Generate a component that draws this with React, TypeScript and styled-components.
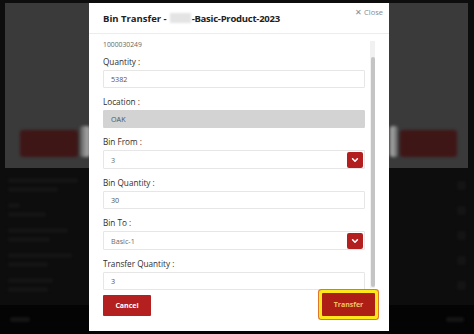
import React from "react";
import styled, { createGlobalStyle } from "styled-components";

const Global = createGlobalStyle`
  html, body { margin: 0; padding: 0; width: 474px; height: 334px; overflow: hidden; background: #0d0d0d; }
  body { font-family: "Open Sans", "Liberation Sans", sans-serif; }
  * { box-sizing: border-box; }
`;

const Page = styled.div`
  position: relative;
  width: 474px;
  height: 334px;
  display: flex;
  flex-direction: column;
  background: #0d0d0d;
  overflow: hidden;
`;

const TopPanel = styled.div`
  margin: 3px 6px 0 5px;
  height: 165px;
  flex-shrink: 0;
  background: #3a3a3a;
  display: flex;
  align-items: flex-end;
  justify-content: space-between;
  padding: 0 11px 11px 15px;
`;

const BlobGroup = styled.div`
  display: flex;
  gap: 2px;
  align-items: flex-end;
`;

const Blob = styled.div<{ $tone: "red" | "light"; $w: number }>`
  width: ${(p) => p.$w}px;
  height: ${(p) => (p.$tone === "red" ? 27 : 31)}px;
  background: ${(p) =>
    p.$tone === "red"
      ? "#3f1616"
      : "linear-gradient(90deg, #5a5a5a, #9a9a9a 60%, #a8a8a8)"};
  border-radius: 3px;
  filter: blur(1.5px);
`;

const BlobLightRight = styled(Blob)`
  background: linear-gradient(90deg, #a8a8a8, #9a9a9a 40%, #5a5a5a);
`;

const List = styled.div`
  flex: 1;
  display: flex;
  flex-direction: column;
  gap: 7px;
  padding: 8px 8px 0 8px;
`;

const ListRow = styled.div`
  display: flex;
  justify-content: space-between;
  align-items: center;
`;

const FaintText = styled.div<{ $w: number }>`
  width: ${(p) => p.$w}px;
  height: 5px;
  margin: 2px 0;
  background: #141414;
  border-radius: 2px;
  filter: blur(1px);
`;

const FaintStack = styled.div`
  display: flex;
  flex-direction: column;
`;

const FaintDot = styled.div`
  width: 9px;
  height: 9px;
  border-radius: 2px;
  background: #141414;
  filter: blur(1px);
`;

const BottomBar = styled.div`
  height: 29px;
  flex-shrink: 0;
  background: #040404;
  display: flex;
  align-items: center;
  justify-content: space-between;
  padding: 0 10px;
`;

const Modal = styled.div`
  position: absolute;
  left: 89px;
  top: 3px;
  width: 300px;
  height: 328px;
  background: #ffffff;
  display: flex;
  flex-direction: column;
`;

const Header = styled.div`
  height: 31px;
  flex-shrink: 0;
  border-bottom: 1px solid #ececec;
  display: flex;
  justify-content: space-between;
  align-items: center;
  padding: 0 6px 0 14px;
`;

const Title = styled.h2`
  margin: 0;
  font-size: 9.5px;
  font-weight: 700;
  color: #222;
  display: flex;
  align-items: center;
  white-space: nowrap;
`;

const TitleTail = styled.span`
  letter-spacing: -0.25px;
`;

const Redacted = styled.span`
  display: inline-block;
  width: 21px;
  height: 10px;
  margin: 0 1px 0 3px;
  background: #e4e4e4;
  filter: blur(0.8px);
`;

const CloseButton = styled.button`
  align-self: flex-start;
  margin-top: 4px;
  border: none;
  background: none;
  padding: 0;
  font-family: inherit;
  font-size: 7.5px;
  line-height: 10px;
  color: #8a8a8a;
  display: flex;
  align-items: center;
  gap: 2px;
  cursor: pointer;
`;

const ScrollRow = styled.div`
  margin: 6px 14px 0 14px;
  height: 250px;
  flex-shrink: 0;
  display: flex;
`;

const Viewport = styled.div`
  flex: 1;
  min-width: 0;
  overflow: hidden;
  padding-right: 5px;
`;

const Track = styled.div`
  width: 5px;
  margin: 1px 0 2px;
  background: #f1f1f1;
  display: flex;
  flex-direction: column;
`;

const Thumb = styled.div<{ $offset: number; $length: number }>`
  margin-top: ${(p) => p.$offset}px;
  height: ${(p) => p.$length}px;
  margin-left: 1px;
  width: 4px;
  background: #c4c4c4;
  border-radius: 2px;
`;

const Content = styled.div`
  display: flex;
  flex-direction: column;
`;

const Field = styled.div<{ $first?: boolean }>`
  display: flex;
  flex-direction: column;
  gap: 3px;
  margin-top: ${(p) => (p.$first ? 8 : 9)}px;
`;

const Label = styled.label`
  font-size: 8.2px;
  line-height: 10px;
  font-weight: 500;
  color: #2e2e2e;
`;

const Value = styled.div`
  font-size: 6.8px;
  line-height: 9px;
  color: #666;
`;

const Input = styled.div<{ $disabled?: boolean }>`
  height: 18px;
  border: 1px solid ${(p) => (p.$disabled ? "#d3d3d3" : "#e6e6e6")};
  background: ${(p) => (p.$disabled ? "#d3d3d3" : "#fff")};
  border-radius: 1px;
  padding: 0 7px;
  display: flex;
  align-items: center;
  font-size: 7.2px;
  color: #555;
`;

const Select = styled.div`
  height: 19px;
  border: 1px solid #e6e6e6;
  border-radius: 1px;
  padding: 0 1px 0 7px;
  display: flex;
  align-items: center;
  justify-content: space-between;
  font-size: 7.2px;
  color: #6a6a6a;
`;

const SelectButton = styled.span`
  width: 16px;
  height: 16px;
  border-radius: 2px;
  background: #b31f1f;
  display: flex;
  align-items: center;
  justify-content: center;
`;

const Footer = styled.div`
  margin-top: 5px;
  padding: 0 14px;
  display: flex;
  justify-content: space-between;
  align-items: center;
`;

const Button = styled.button<{ $highlight?: boolean }>`
  height: ${(p) => (p.$highlight ? 23 : 21)}px;
  width: ${(p) => (p.$highlight ? 53 : 48)}px;
  margin-top: ${(p) => (p.$highlight ? -2 : 0)}px;
  border: none;
  border-radius: 1px;
  background: ${(p) => (p.$highlight ? "#ad1f14" : "#b3201f")};
  color: ${(p) => (p.$highlight ? "#f5c160" : "#fff")};
  font-family: inherit;
  font-size: 7px;
  font-weight: 700;
  padding: 0;
  cursor: pointer;
  box-shadow: ${(p) =>
    p.$highlight ? "0 0 0 3px #ffe81a, 0 0 0 4px #e0782a" : "none"};
`;

const Chevron = () => (
  <svg width="8" height="8" viewBox="0 0 10 10">
    <polyline
      points="2,3.5 5,6.5 8,3.5"
      fill="none"
      stroke="#fff"
      strokeWidth="2"
      strokeLinecap="round"
      strokeLinejoin="round"
    />
  </svg>
);

const listRows = [
  [70, 50],
  [12, 38],
  [60, 42],
  [64, 40],
  [45, 40],
];

export default function App() {
  return (
    <>
      <Global />
      <Page>
        <TopPanel>
          <BlobGroup>
            <Blob $tone="red" $w={58} />
            <Blob $tone="light" $w={10} />
          </BlobGroup>
          <BlobGroup>
            <BlobLightRight $tone="light" $w={8} />
            <Blob $tone="red" $w={57} />
          </BlobGroup>
        </TopPanel>
        <List>
          {listRows.map(([a, b], i) => (
            <ListRow key={i}>
              <FaintStack>
                <FaintText $w={a} />
                <FaintText $w={b} />
              </FaintStack>
              <FaintDot />
            </ListRow>
          ))}
        </List>
        <BottomBar>
          <FaintText $w={20} />
          <FaintText $w={18} />
        </BottomBar>

        <Modal role="dialog">
          <Header>
            <Title>
              Bin Transfer -<Redacted />
              <TitleTail>-Basic-Product-2023</TitleTail>
            </Title>
            <CloseButton>
              <span>✕</span>
              <span>Close</span>
            </CloseButton>
          </Header>
          <ScrollRow>
            <Viewport>
              <Content>
                <Value>1000030249</Value>
                <Field $first>
                  <Label>Quantity :</Label>
                  <Input>5382</Input>
                </Field>
                <Field>
                  <Label>Location :</Label>
                  <Input $disabled>OAK</Input>
                </Field>
                <Field>
                  <Label>Bin From :</Label>
                  <Select>
                    <span>3</span>
                    <SelectButton>
                      <Chevron />
                    </SelectButton>
                  </Select>
                </Field>
                <Field>
                  <Label>Bin Quantity :</Label>
                  <Input>30</Input>
                </Field>
                <Field>
                  <Label>Bin To :</Label>
                  <Select>
                    <span>Basic-1</span>
                    <SelectButton>
                      <Chevron />
                    </SelectButton>
                  </Select>
                </Field>
                <Field>
                  <Label>Transfer Quantity :</Label>
                  <Input>3</Input>
                </Field>
              </Content>
            </Viewport>
            <Track>
              <Thumb $offset={16} $length={230} />
            </Track>
          </ScrollRow>
          <Footer>
            <Button>Cancel</Button>
            <Button $highlight>Transfer</Button>
          </Footer>
        </Modal>
      </Page>
    </>
  );
}
